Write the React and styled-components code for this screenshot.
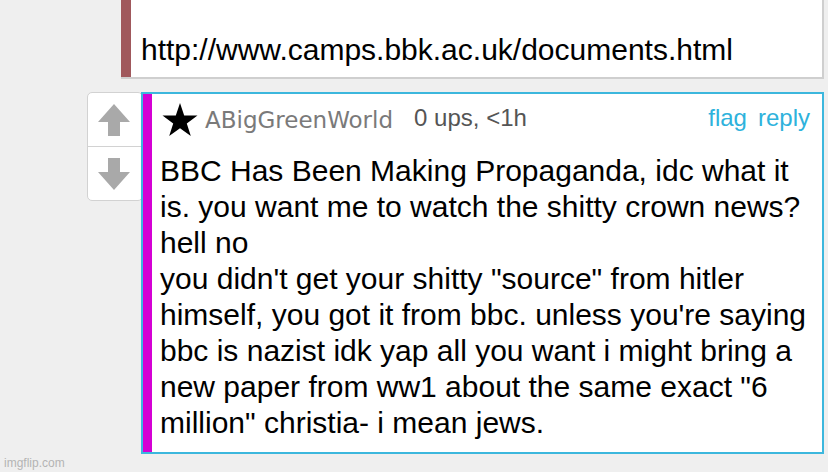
import React from "react";
import styled, { createGlobalStyle } from "styled-components";

const Global = createGlobalStyle`
  html, body { margin: 0; padding: 0; }
  body {
    background: #efefef;
    width: 828px;
    height: 472px;
    overflow: hidden;
    font-family: "Liberation Sans", Arial, sans-serif;
  }
`;

const Page = styled.div`
  position: relative;
  width: 828px;
  height: 472px;
  display: flex;
  flex-direction: column;
`;

const ParentComment = styled.div`
  margin-left: 121px;
  width: 703px;
  height: 79px;
  box-sizing: border-box;
  display: flex;
  background: #fff;
  border-right: 2px solid #cfcfcf;
  border-bottom: 2px solid #cfcfcf;
`;

const ParentBar = styled.div`
  width: 10px;
  flex: none;
  background: #a0585c;
`;

const ParentText = styled.div`
  padding: 32px 0 0 10px;
  font-size: 30px;
  line-height: 35px;
  color: #000;
`;

const Row = styled.div`
  margin-top: 13px;
  margin-left: 87px;
  display: flex;
  align-items: flex-start;
`;

const VoteBox = styled.div`
  width: 56px;
  flex: none;
  box-sizing: border-box;
  border: 1px solid #d2d2d2;
  border-radius: 5px;
  background: #fff;
  display: flex;
  flex-direction: column;
`;

const VoteCell = styled.div`
  height: ${(p) => p.$h}px;
  display: flex;
  align-items: center;
  justify-content: center;
  padding-right: 2px;
  border-top: ${(p) => (p.$divider ? "1px solid #d2d2d2" : "none")};
`;

const CommentBox = styled.div`
  margin-left: -2px;
  width: 683px;
  height: 362px;
  box-sizing: border-box;
  border: 2px solid #3cb7dd;
  background: #fff;
  display: flex;
`;

const Stripe = styled.div`
  width: 9px;
  flex: none;
  background: #d400d4;
`;

const CommentInner = styled.div`
  flex: 1;
  display: flex;
  flex-direction: column;
  padding: 6px 8px 0 8px;
  min-width: 0;
`;

const Header = styled.div`
  display: flex;
  align-items: flex-start;
  padding-left: 2px;
  padding-right: 4px;
`;

const Star = styled.svg`
  margin-top: 3px;
  flex: none;
`;

const Username = styled.span`
  margin-top: 9px;
  margin-left: 7px;
  font-family: "DejaVu Sans", Verdana, sans-serif;
  font-size: 23px;
  line-height: 23px;
  color: #7a7a7a;
`;

const Meta = styled.span`
  margin-top: 6px;
  margin-left: 21px;
  font-size: 24px;
  line-height: 24px;
  color: #555;
`;

const Actions = styled.div`
  margin-left: auto;
  margin-top: 6px;
  display: flex;
  gap: 11px;
`;

const Action = styled.span`
  font-size: 24px;
  line-height: 24px;
  color: #2eb2dc;
`;

const Body = styled.div`
  margin-top: 17px;
  font-size: 30px;
  line-height: 36px;
  color: #000;
  white-space: pre-line;
`;

const Watermark = styled.div`
  position: absolute;
  left: 4px;
  bottom: 2px;
  font-size: 12px;
  color: #b4b4b4;
`;

const Arrow = ({ down }) => (
  <svg width="32" height="32" viewBox="0 0 32 32" style={down ? { transform: "rotate(180deg)" } : undefined}>
    <polygon points="16,0 32,18 22,18 22,32 10,32 10,18 0,18" fill="#a9a9a9" />
  </svg>
);

const bodyText = `BBC Has Been Making Propaganda, idc what it is. you want me to watch the shitty crown news? hell no
you didn't get your shitty "source" from hitler himself, you got it from bbc. unless you're saying bbc is nazist idk yap all you want i might bring a new paper from ww1 about the same exact "6 million" christia- i mean jews.`;

export default function App() {
  return (
    <Page>
      <Global />
      <ParentComment>
        <ParentBar />
        <ParentText>http://www.camps.bbk.ac.uk/documents.html</ParentText>
      </ParentComment>
      <Row>
        <VoteBox>
          <VoteCell $h={53}>
            <Arrow />
          </VoteCell>
          <VoteCell $h={53} $divider>
            <Arrow down />
          </VoteCell>
        </VoteBox>
        <CommentBox>
          <Stripe />
          <CommentInner>
            <Header>
              <Star width="36" height="33" viewBox="0 0 36 33">
                <polygon
                  points="18,0 22.2,12.6 35.5,12.6 24.8,20.4 28.8,33 18,25.2 7.2,33 11.2,20.4 0.5,12.6 13.8,12.6"
                  fill="#000"
                />
              </Star>
              <Username>ABigGreenWorld</Username>
              <Meta>0 ups, &lt;1h</Meta>
              <Actions>
                <Action>flag</Action>
                <Action>reply</Action>
              </Actions>
            </Header>
            <Body>{bodyText}</Body>
          </CommentInner>
        </CommentBox>
      </Row>
      <Watermark>imgflip.com</Watermark>
    </Page>
  );
}
